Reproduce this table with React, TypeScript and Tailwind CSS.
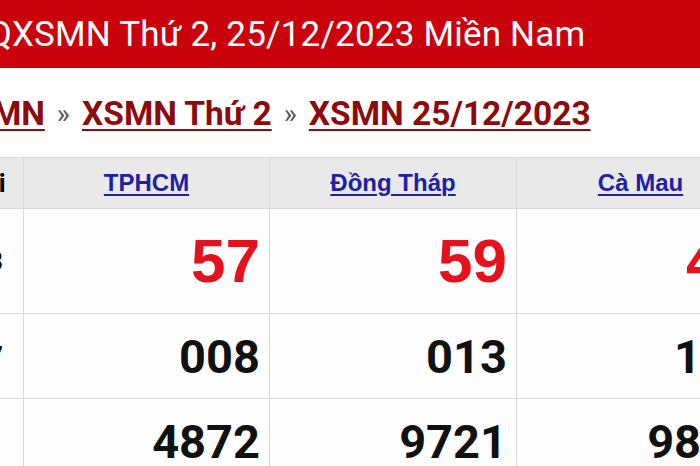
import React from "react";

const provinces = ["TPHCM", "Đồng Tháp", "Cà Mau"];

// giải 6 có 3 số mỗi đài, chỉ số đầu lọt vào khung
const rows = [
  { label: "G8", values: [["57"], ["59"], ["48"]], red: true, h: "h-[105px]" },
  { label: "G7", values: [["008"], ["013"], ["125"]], red: false, h: "h-[84px]" },
  { label: "G6", values: [["4872", "3019", "5561"], ["9721", "0486", "2253"], ["9806", "7134", "6690"]], red: false, h: "" },
];

export default function App() {
  return (
    <div className="w-[700px] h-[466px] overflow-hidden bg-white font-['Roboto',sans-serif]">
      <div className="h-[68px] bg-[#c9020b] flex items-center overflow-hidden">
        <span className="ml-[-34px] whitespace-nowrap text-[35px] leading-none text-white tracking-[0.2px]">
          KQXSMN Thứ 2, 25/12/2023 Miền Nam
        </span>
      </div>

      <div className="h-[89px] flex items-center whitespace-nowrap overflow-hidden">
        <div className="ml-[-50px] flex items-center gap-[12px] text-[33.5px] font-bold leading-none pt-[2px]">
          <a className="text-[#8c0c0e] underline decoration-[2px] underline-offset-[4px]">XSMN</a>
          <span className="text-[#555] text-[28px] font-normal">»</span>
          <a className="text-[#8c0c0e] underline decoration-[2px] underline-offset-[4px]">XSMN Thứ 2</a>
          <span className="text-[#555] text-[28px] font-normal">»</span>
          <a className="text-[#8c0c0e] underline decoration-[2px] underline-offset-[4px]">XSMN 25/12/2023</a>
        </div>
      </div>

      <table className="ml-[-48px] w-[812px] border-collapse table-fixed">
        <colgroup>
          <col className="w-[71px]" />
          <col className="w-[246px]" />
          <col className="w-[247px]" />
          <col className="w-[248px]" />
        </colgroup>
        <thead>
          <tr className="h-[51px] bg-[#e9e9e9]">
            <th className="border border-[#d8d8d8] pr-[10px] text-[26px] font-bold text-black text-center">Giải</th>
            {provinces.map((p) => (
              <th key={p} className="border border-[#d8d8d8] text-center">
                <a className="font-['Liberation_Sans',Arial,sans-serif] text-[24px] font-bold text-[#2020a4] underline decoration-[1.5px] underline-offset-[3px]">
                  {p}
                </a>
              </th>
            ))}
          </tr>
        </thead>
        <tbody>
          {rows.map((r) => (
            <tr key={r.label} className={`${r.h} bg-[#fdfdfd]`}>
              <td className="border border-[#d8d8d8] pr-[3px] text-[26px] font-bold text-black text-center">{r.label}</td>
              {r.values.map((nums, i) => (
                <td key={i} className="border border-[#d8d8d8] text-right pr-[9px] font-bold">
                  {nums.map((n) =>
                    r.red ? (
                      <div key={n} className="font-['Liberation_Sans',Arial,sans-serif] text-[62px] leading-none text-[#e3121c]">
                        {n}
                      </div>
                    ) : (
                      <div key={n} className="h-[84px] flex items-center justify-end text-[47px] leading-none text-[#111]">
                        {n}
                      </div>
                    )
                  )}
                </td>
              ))}
            </tr>
          ))}
        </tbody>
      </table>
    </div>
  );
}
